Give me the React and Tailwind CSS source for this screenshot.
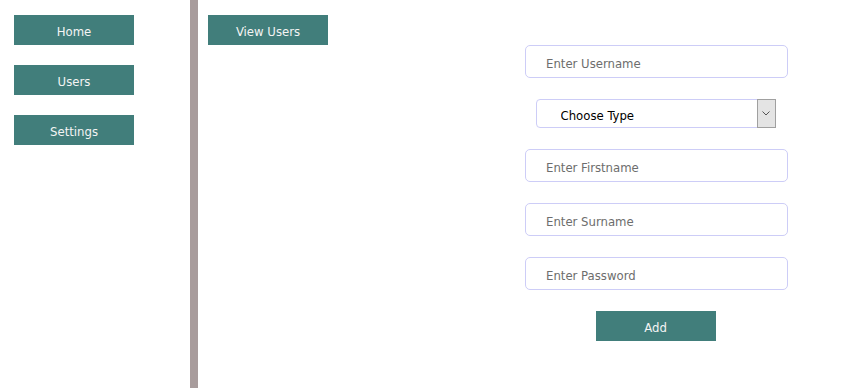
import { useState } from 'react'

const btn =
  'w-[120px] h-[30px] bg-[#417e7b] text-[#f4f4f4] text-[13px] pt-[3px] flex items-center justify-center'

function Field({ placeholder, type = 'text' }) {
  return (
    <input
      type={type}
      placeholder={placeholder}
      className="w-[263px] h-[33px] rounded-[5px] border border-[#cdcdf7] bg-white pl-[20px] pt-[3px] text-[13px] text-black placeholder:text-[#6d6d6d] outline-none"
    />
  )
}

export default function App() {
  const [kind, setKind] = useState('')

  return (
    <div
      className="flex h-[388px] w-[850px] bg-white"
      style={{ fontFamily: '"DejaVu Sans Condensed", "DejaVu Sans", Verdana, sans-serif' }}
    >
      {/* Sidebar */}
      <div className="w-[190px] shrink-0 flex flex-col gap-[20px] pl-[14px] pt-[15px]">
        <button className={btn}>Home</button>
        <button className={btn}>Users</button>
        <button className={btn}>Settings</button>
      </div>
      <div className="w-[8px] h-full bg-[#a89c9c] shrink-0" />

      {/* Main */}
      <div className="flex flex-1 pt-[15px] pl-[10px]">
        <div>
          <button className={btn}>View Users</button>
        </div>
        <div className="ml-[197px] pt-[30px] flex flex-col items-center w-[263px]">
          <Field placeholder="Enter Username" />
          <div className="relative mt-[21px] w-[240px] h-[29px] -translate-x-[1px]">
            <select
              value={kind}
              onChange={(e) => setKind(e.target.value)}
              className="appearance-none w-full h-full rounded-[4px] border border-[#cdcdf7] bg-white pl-[24px] pt-[5px] text-[13px] text-black outline-none"
            >
              <option value="">Choose Type</option>
              <option value="admin">Admin</option>
              <option value="user">User</option>
            </select>
            <div className="pointer-events-none absolute right-[0px] top-[0px] w-[19px] h-[29px] bg-[#e4e4e4] border border-[#a0a0a0] flex items-center justify-center">
              <svg width="8" height="5" viewBox="0 0 8 5" fill="none">
                <path d="M0.5 0.5 L4 4 L7.5 0.5" stroke="#555" strokeWidth="1" />
              </svg>
            </div>
          </div>
          <div className="mt-[21px]">
            <Field placeholder="Enter Firstname" />
          </div>
          <div className="mt-[21px]">
            <Field placeholder="Enter Surname" />
          </div>
          <div className="mt-[21px]">
            <Field placeholder="Enter Password" type="password" />
          </div>
          <button className={`${btn} mt-[21px] -translate-x-[1px]`}>Add</button>
        </div>
      </div>
    </div>
  )
}
